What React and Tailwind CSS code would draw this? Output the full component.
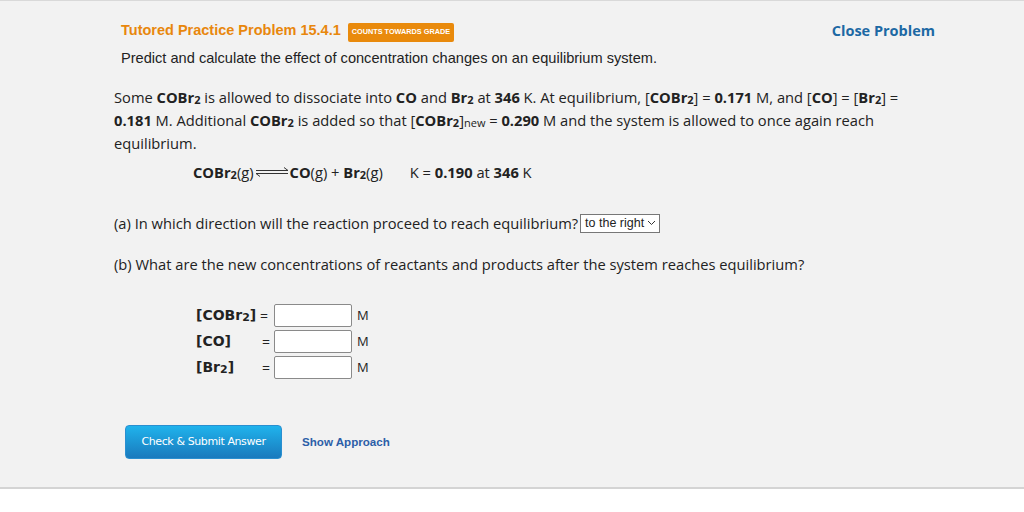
import React from "react";

const open = { fontFamily: '"Open Sans", "Liberation Sans", sans-serif' };
const arial = { fontFamily: '"Liberation Sans", Arial, sans-serif' };
const verdana = { fontFamily: '"DejaVu Sans", Verdana, sans-serif' };

function Sub({ children }) {
  return <sub className="text-[11px] leading-none relative top-[1px]">{children}</sub>;
}

function Equil() {
  return (
    <svg width="34" height="10" viewBox="0 0 34 10" className="inline-block mx-[1px]">
      <path d="M1 3.5 H33 L29 0.5" fill="none" stroke="#333" strokeWidth="1" />
      <path d="M33 6.5 H1 L5 9.5" fill="none" stroke="#333" strokeWidth="1" />
    </svg>
  );
}

function Row({ label, eq }) {
  return (
    <div className="flex items-center h-[26px]">
      <div className="font-bold text-[14px] w-[64px]" style={verdana}>{label}</div>
      <span className={`text-[14px] w-[14px] ${eq}`}>=</span>
      <input className="w-[78px] h-[23px] bg-white border border-[#8a8a8a] rounded-[2px]" />
      <span className="text-[13px] ml-[5px]">M</span>
    </div>
  );
}

export default function App() {
  return (
    <div className="w-[1024px] h-[512px] bg-white overflow-hidden">
      <div className="h-[487px] bg-[#f2f2f2] border-t border-[#d9d9d9] relative">
        <div className="flex items-center justify-between pl-[121px] pr-[89px] pt-[19px]">
          <div className="flex items-center gap-[7px]" style={arial}>
            <span className="text-[14.5px] font-bold text-[#e8870d]">Tutored Practice Problem 15.4.1</span>
            <span className="bg-[#e98a0c] text-white text-[7.3px] font-bold px-[4px] h-[19px] flex items-center rounded-[2px] mt-[3px]">COUNTS TOWARDS GRADE</span>
          </div>
          <span className="text-[14.5px] font-bold text-[#1d69a4]" style={open}>Close Problem</span>
        </div>
        <div className="pl-[121px] mt-[6px] text-[14.6px] text-[#222]" style={arial}>
          Predict and calculate the effect of concentration changes on an equilibrium system.
        </div>

        <div className="pl-[114px] w-[914px] mt-[16px] text-[14.7px] leading-[23px] text-[#222]" style={open}>
          <p>
            Some <b>COBr<Sub>2</Sub></b> is allowed to dissociate into <b>CO</b> and <b>Br<Sub>2</Sub></b> at <b>346</b> K. At equilibrium, [<b>COBr<Sub>2</Sub></b>] = <b>0.171</b> M, and [<b>CO</b>] = [<b>Br<Sub>2</Sub></b>] = <b>0.181</b> M. Additional <b>COBr<Sub>2</Sub></b> is added so that [<b>COBr<Sub>2</Sub></b>]<Sub>new</Sub> = <b>0.290</b> M and the system is allowed to once again reach equilibrium.
          </p>
          <div className="pl-[79px] mt-[6px] flex items-center">
            <span><b>COBr<Sub>2</Sub></b>(g)</span>
            <Equil />
            <span><b>CO</b>(g) + <b>Br<Sub>2</Sub></b>(g)</span>
            <span className="ml-[27px]">K = <b>0.190</b> at <b>346</b> K</span>
          </div>

          <div className="mt-[28px] flex items-center">
            <span>(a) In which direction will the reaction proceed to reach equilibrium?</span>
            <span className="ml-[2px] h-[19px] border border-[#777] bg-white pl-[4px] pr-[3px] flex items-center gap-[3px] text-[12.5px] text-[#222]" style={arial}>
              to the right
              <svg width="9" height="6" viewBox="0 0 9 6"><path d="M1 1 L4.5 4.5 L8 1" fill="none" stroke="#333" strokeWidth="1" /></svg>
            </span>
          </div>

          <div className="mt-[18px]">(b) What are the new concentrations of reactants and products after the system reaches equilibrium?</div>

          <div className="pl-[82px] mt-[27px]">
            <Row label={<>[COBr<Sub>2</Sub>]</>} eq="" />
            <Row label="[CO]" eq="pl-[2px]" />
            <Row label={<>[Br<Sub>2</Sub>]</>} eq="pl-[2px]" />
          </div>
        </div>

        <div className="pl-[125px] mt-[44px] flex items-center">
          <button className="w-[157px] h-[34px] rounded-[4px] text-white text-[11px] bg-gradient-to-b from-[#20b3ec] to-[#1a7abd] border border-[#2a8fd0]" style={{ fontFamily: '"DejaVu Sans", Tahoma, sans-serif', letterSpacing: "-0.4px" }}>
            Check &amp; Submit Answer
          </button>
          <span className="ml-[20px] text-[11.6px] font-bold text-[#2c5ea8]" style={arial}>Show Approach</span>
        </div>
      </div>
      <div className="h-[2px] bg-[#d4d4d4]" />
    </div>
  );
}
